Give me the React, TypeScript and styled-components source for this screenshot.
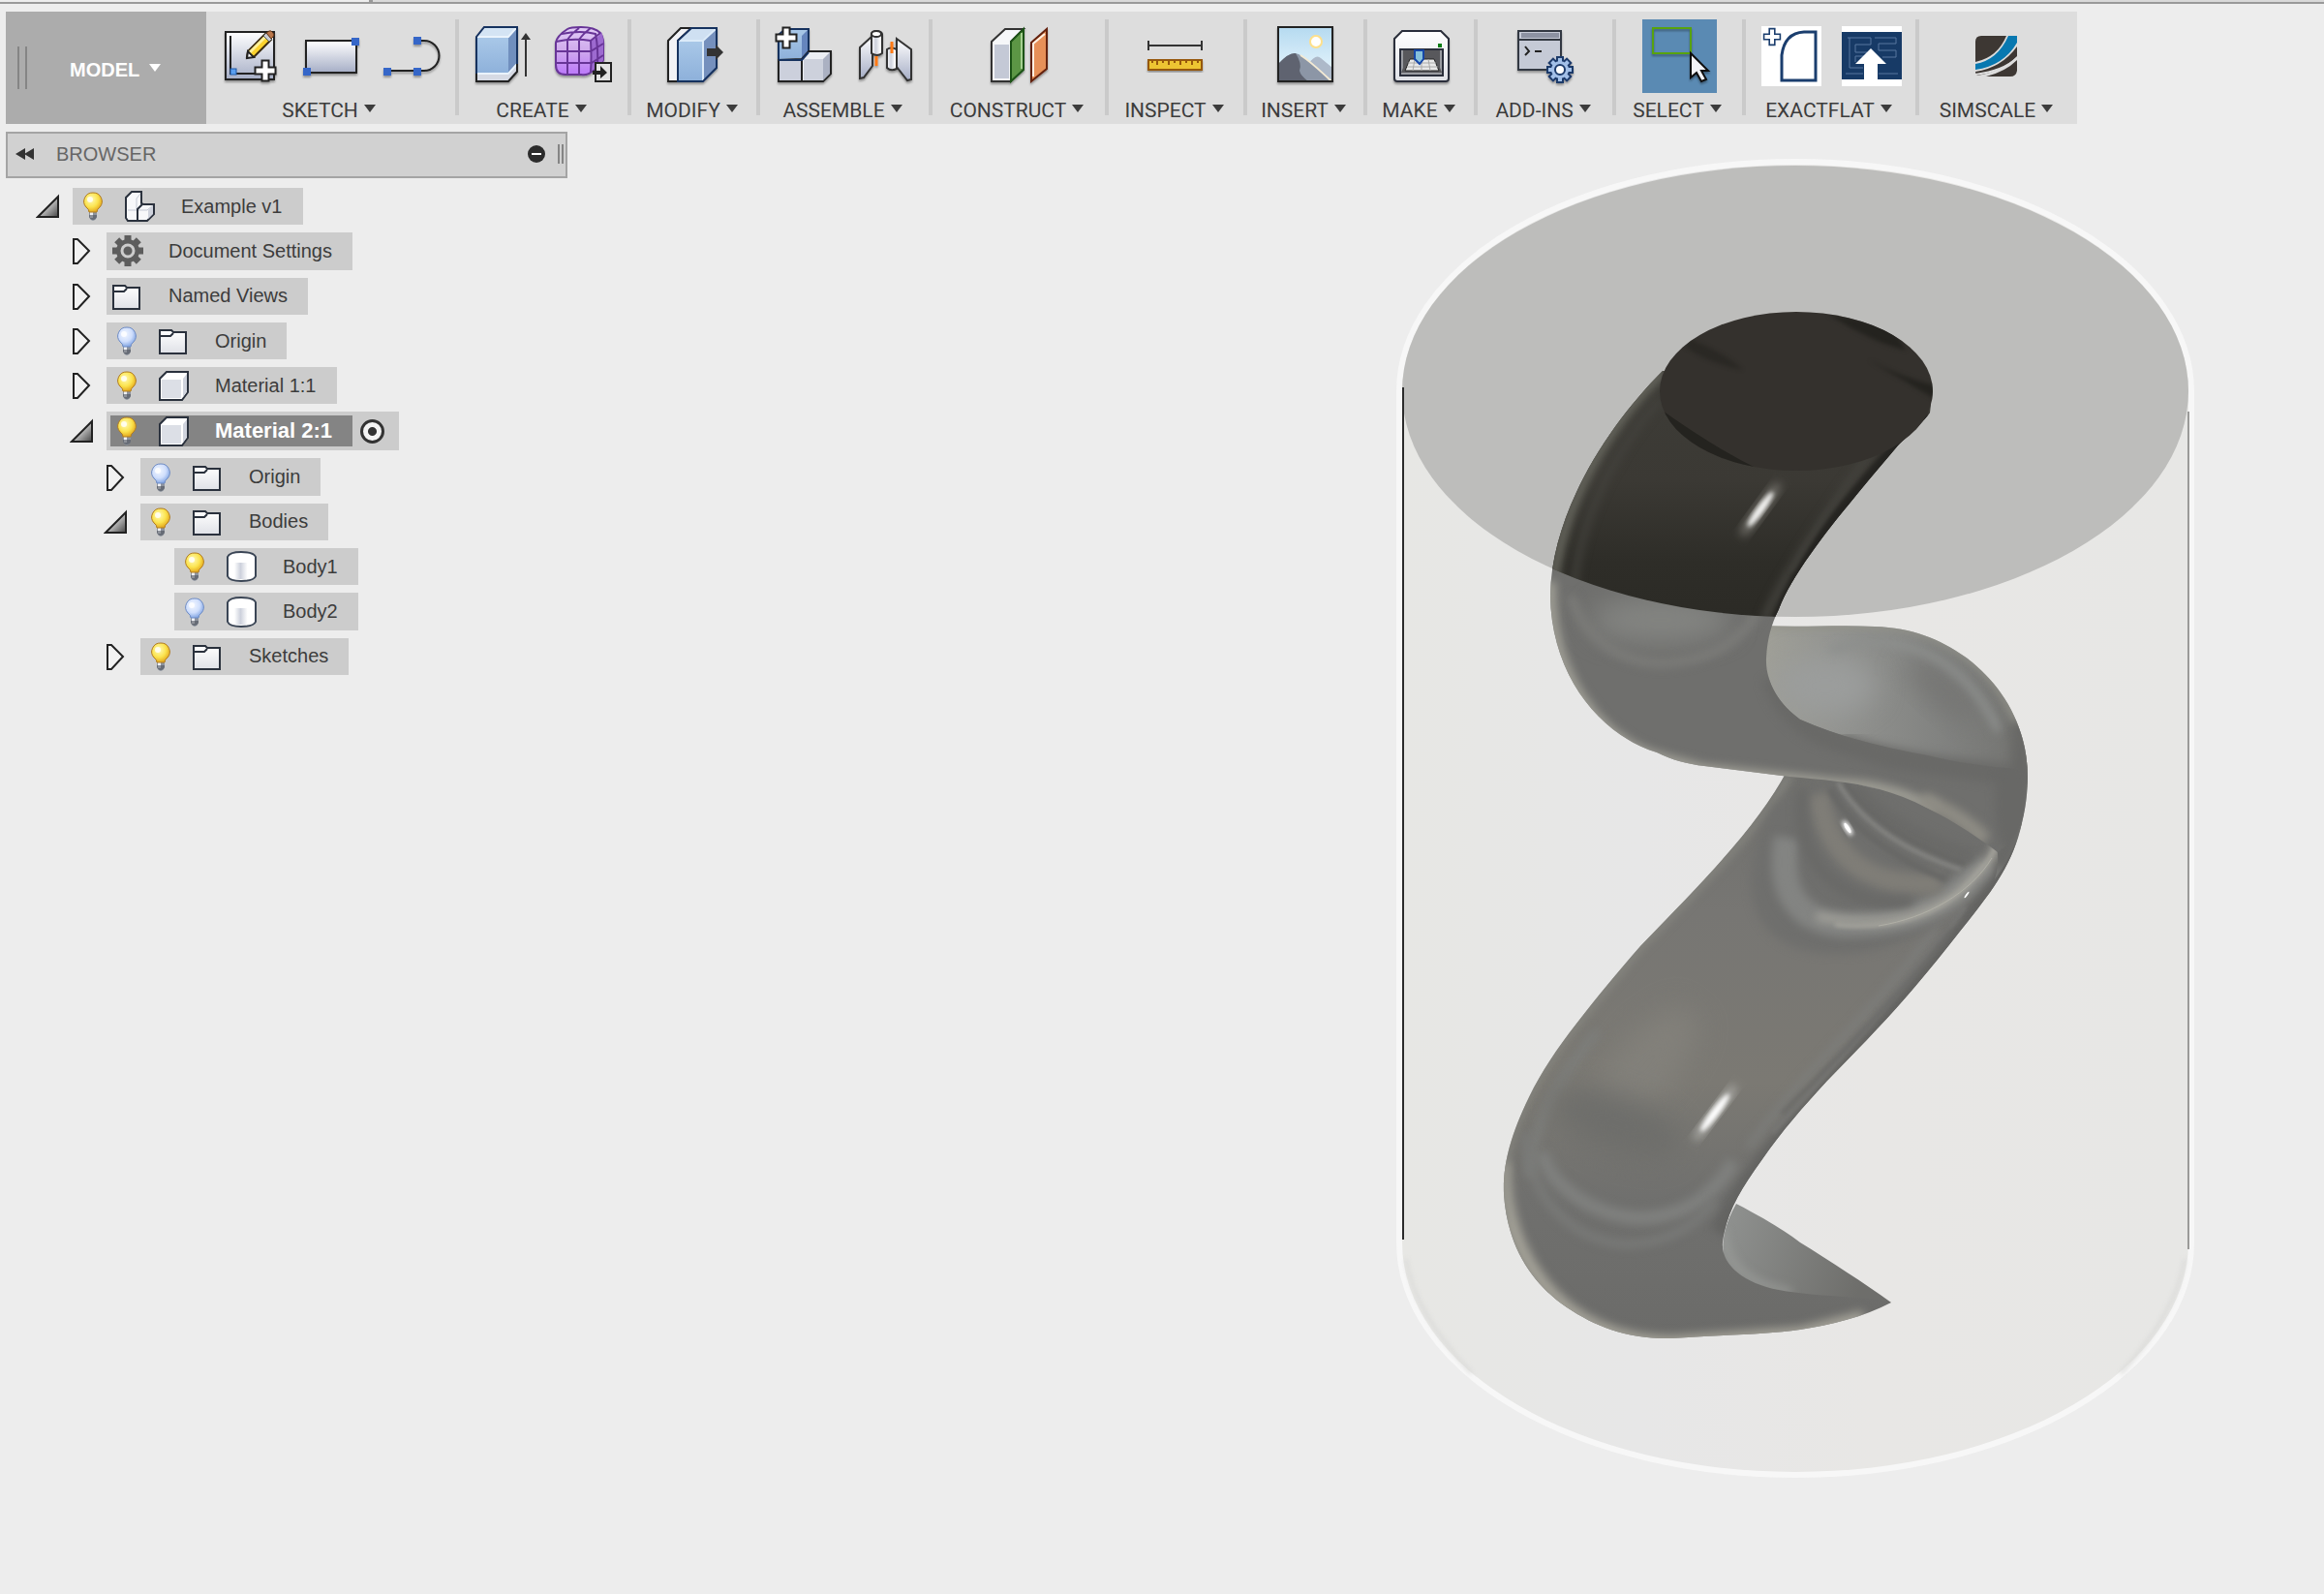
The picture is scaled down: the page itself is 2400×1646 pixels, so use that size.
import React, { useState } from "react";
import styled, { createGlobalStyle } from "styled-components";

const GlobalStyle = createGlobalStyle`
  *, *::before, *::after { box-sizing: border-box; }
  body {
    margin: 0;
    background: #ededed;
    font-family: "Liberation Sans", Arial, Helvetica, sans-serif;
    font-size: 20px;
    color: #3c3c3c;
  }
  button {
    margin: 0;
    padding: 0;
    border: 0;
    background: none;
    color: inherit;
    font: inherit;
    cursor: pointer;
  }
  svg { display: block; }
`;

const Page = styled.div`
  display: flex;
  flex-direction: column;
  min-height: 100vh;
  overflow: hidden;
`;

const TabStrip = styled.div`
  display: flex;
  height: 4px;
  border-bottom: 2px solid #999999;
`;

const ActiveTab = styled.div`
  width: 385px;
  border-right: 4px solid #999999;
`;

const OtherTabs = styled.div`
  flex: 1;
  background: #d9d9d9;
`;

/* ---------- toolbar ---------- */

const Toolbar = styled.header`
  display: flex;
  align-self: flex-start;
  height: 116px;
  margin: 8px 6px 0;
  background: #dddddd;
`;

const ModelButton = styled.button`
  display: flex;
  align-items: center;
  width: 207px;
  padding: 0 12px;
  background: #acacac;
  color: #ffffff;
  font-weight: bold;
`;

const Grip = styled.span<{ $height: number; $width: number }>`
  width: ${(p) => p.$width}px;
  height: ${(p) => p.$height}px;
  border: solid #858585;
  border-width: 0 2px;
`;

const ModelText = styled.span`
  display: flex;
  align-items: center;
  gap: 10px;
  margin-left: 44px;
  padding-top: 4px;
`;

const Group = styled.section<{ $width: number }>`
  display: flex;
  flex-direction: column;
  align-items: center;
  width: ${(p) => p.$width}px;
  padding-top: 8px;
`;

const Divider = styled.div`
  width: 4px;
  height: 99px;
  margin-top: 8px;
  background: #cacaca;
`;

const IconRow = styled.div`
  display: flex;
  gap: 6px;
`;

const ToolButton = styled.button<{ $active?: boolean }>`
  width: 77px;
  height: 76px;
  background: ${(p) => (p.$active ? "#5a8ab3" : "transparent")};
`;

const MenuButton = styled.button`
  display: flex;
  align-items: center;
  gap: 6px;
  margin-top: 6px;
  padding-right: 4px;
  font-family: Roboto, "Liberation Sans", sans-serif;
  font-size: 21px;
  line-height: 24px;
  white-space: nowrap;
`;

const Caret = styled.span`
  border: solid transparent;
  border-width: 8px 6px 0;
  border-top-color: currentColor;
  margin-bottom: 4px;
`;

/* ---------- browser panel ---------- */

const Workspace = styled.main`
  display: flex;
  flex: 1;
  justify-content: space-between;
  align-items: flex-start;
`;

const Panel = styled.aside`
  width: 580px;
  margin: 8px 0 0 6px;
`;

const PanelHeader = styled.div`
  display: flex;
  align-items: center;
  height: 48px;
  padding: 0 2px 2px 8px;
  border: 2px solid #a4a4a4;
  background: #d1d1d1;
`;

const PanelTitle = styled.h2`
  flex: 1;
  margin: 0 0 0 22px;
  color: #666666;
  font-size: 20px;
  font-weight: normal;
`;

const PanelActions = styled.div`
  display: flex;
  align-items: center;
  gap: 13px;
`;

const Tree = styled.ul`
  display: grid;
  grid-auto-rows: 1fr;
  row-gap: 8px;
  height: 503px;
  margin: 10px 0 0;
  padding: 0 0 0 31px;
  list-style: none;
`;

const TreeRow = styled.li<{ $level: number }>`
  display: flex;
  align-items: center;
  padding-left: ${(p) => p.$level * 35}px;
`;

const Expander = styled.button`
  width: 38px;
  height: 38px;
`;

const ExpanderSpace = styled.span`
  width: 38px;
`;

const NodeBox = styled.div<{ $selected?: boolean }>`
  display: flex;
  align-items: center;
  height: 100%;
  padding: ${(p) => (p.$selected ? "4px 15px 4px 4px" : "0")};
  background: #cccccc;
`;

const NodeInner = styled.div<{ $selected?: boolean }>`
  display: flex;
  align-items: center;
  height: 100%;
  padding: ${(p) => (p.$selected ? "0 21px 0 2px" : "0 21px 0 6px")};
  background: ${(p) => (p.$selected ? "#848484" : "transparent")};
  color: ${(p) => (p.$selected ? "#ffffff" : "#3c3c3c")};
  font-size: ${(p) => (p.$selected ? 22 : 20)}px;
  font-weight: ${(p) => (p.$selected ? "bold" : "normal")};
`;

const BulbButton = styled.button`
  width: 48px;
`;

const NodeName = styled.button`
  display: flex;
  align-items: center;
  gap: 26px;
  white-space: nowrap;
`;

const ActiveRadio = styled.input`
  appearance: none;
  width: 25px;
  height: 25px;
  margin: 0 0 0 8px;
  border: 3px solid #333333;
  border-radius: 50%;
  background: radial-gradient(circle, #333333 0 4px, #f4f4f4 5px);
`;

const Viewport = styled.div`
  flex: 0 1 860px;
  margin: 12px 120px 0 0;
  & > svg { width: 100%; height: auto; }
`;

/* ---------- toolbar icons ---------- */

const Ico = ({ children }: { children: React.ReactNode }) => (
  <svg width="77" height="76" viewBox="0 0 77 76" aria-hidden="true">
    {children}
  </svg>
);

const Plus = ({ x, y, stroke = "#222" }: { x: number; y: number; stroke?: string }) => (
  <path
    transform={`translate(${x} ${y})`}
    d="M-3.500 -10.500H3.500V-3.500H10.500V3.500H3.500V10.500H-3.500V3.500H-10.500V-3.500H-3.500Z"
    fill="#fff"
    stroke={stroke}
    strokeWidth="2"
  />
);

const SharedDefs = () => (
  <svg width="0" height="0" aria-hidden="true" style={{ position: "absolute" }}>
    <defs>
      <linearGradient id="steel" x1="0" y1="0" x2="0" y2="1">
        <stop offset="0" stopColor="#ffffff" />
        <stop offset="1" stopColor="#a6aec6" />
      </linearGradient>
      <linearGradient id="blueFace" x1="0" y1="0" x2="0" y2="1">
        <stop offset="0" stopColor="#a9c8e8" />
        <stop offset="1" stopColor="#8db0da" />
      </linearGradient>
      <linearGradient id="purple" x1="0" y1="0" x2="0" y2="1">
        <stop offset="0" stopColor="#e2cdf7" />
        <stop offset="0.5" stopColor="#cfa9ec" />
        <stop offset="1" stopColor="#bb78fa" />
      </linearGradient>
      <linearGradient id="sky" x1="0" y1="0" x2="0" y2="1">
        <stop offset="0" stopColor="#b5daf0" />
        <stop offset="1" stopColor="#eef9ff" />
      </linearGradient>
      <linearGradient id="paper" x1="0" y1="0" x2="0" y2="1">
        <stop offset="0" stopColor="#ffffff" />
        <stop offset="1" stopColor="#dfe1e7" />
      </linearGradient>
      <linearGradient id="wedge" x1="0" y1="0" x2="1" y2="1">
        <stop offset="0.3" stopColor="#ececec" />
        <stop offset="1" stopColor="#444444" />
      </linearGradient>
      <linearGradient id="barrel" x1="0" y1="0" x2="1" y2="0">
        <stop offset="0" stopColor="#ffffff" />
        <stop offset="0.4" stopColor="#cdd1dc" />
        <stop offset="0.85" stopColor="#ffffff" />
      </linearGradient>
      <radialGradient id="bulbOn" cx="0.4" cy="0.35" r="0.65">
        <stop offset="0" stopColor="#fffbb8" />
        <stop offset="0.6" stopColor="#fbe34e" />
        <stop offset="1" stopColor="#e4a91e" />
      </radialGradient>
      <radialGradient id="bulbOff" cx="0.4" cy="0.35" r="0.65">
        <stop offset="0" stopColor="#f2f7ff" />
        <stop offset="0.6" stopColor="#cfdefc" />
        <stop offset="1" stopColor="#86a8e4" />
      </radialGradient>
      <filter id="iconShadow" x="-20%" y="-20%" width="140%" height="150%">
        <feDropShadow dx="0" dy="2" stdDeviation="1" floodColor="#000" floodOpacity="0.35" />
      </filter>
    </defs>
  </svg>
);

const SketchIcon = () => (
  <Ico>
    <g filter="url(#iconShadow)">
      <rect x="13" y="13" width="50" height="49" fill="url(#steel)" stroke="#222" strokeWidth="2" />
      <path d="M18 17V56H58" fill="none" stroke="#222" strokeWidth="2" />
      <rect x="18" y="51" width="6" height="6" fill="#5a9ff0" stroke="#1e5aa8" strokeWidth="1" />
      <path d="M35 39L36 33L54 15L60 21L42 39Z" fill="#fbd22e" stroke="#3a2b10" strokeWidth="2" />
      <path d="M38 34L56 16" stroke="#fff19a" strokeWidth="3" />
      <path d="M35 40L36 33L42 39Z" fill="#fff" stroke="#222" strokeWidth="2" />
      <path d="M52 17L55 14L61 20L58 23Z" fill="#c9ccd3" stroke="#555" />
      <path d="M55 14L58 12Q60 11 62 14Q64 16 62 18L60 20Z" fill="#b9774c" stroke="#5c3317" />
      <Plus x={54} y={53} />
    </g>
  </Ico>
);

const RectangleIcon = () => (
  <Ico>
    <g filter="url(#iconShadow)">
      <rect x="13" y="22" width="52" height="33" fill="url(#steel)" stroke="#222" strokeWidth="2" />
      <rect x="60" y="19" width="8" height="8" fill="#3566c8" />
      <rect x="10" y="50" width="8" height="8" fill="#3566c8" />
    </g>
  </Ico>
);

const LineIcon = () => (
  <Ico>
    <g filter="url(#iconShadow)">
      <path d="M45 22H52A15 15 0 0 1 52 53H14" fill="none" stroke="#222" strokeWidth="2" />
      <rect x="41" y="18" width="8" height="8" fill="#3566c8" />
      <rect x="41" y="50" width="8" height="8" fill="#3566c8" />
      <rect x="10" y="50" width="8" height="8" fill="#3566c8" />
    </g>
  </Ico>
);

const ExtrudeIcon = () => (
  <Ico>
    <g filter="url(#iconShadow)">
      <path d="M11 18L19 8H53V54L44 64H11Z" fill="#d4e4f4" />
      <path d="M44 18L53 8V54L44 64Z" fill="#6f8fbe" />
      <rect x="12" y="18" width="32" height="39" fill="url(#blueFace)" />
      <path d="M12 57H44L53 47V54L44 64H12Z" fill="#d6dae4" />
      <path d="M12 56H44L53 46M12 18H44L52 9" fill="none" stroke="#eaf3fc" strokeWidth="2" />
      <path d="M11 56V18L19 8H53V46" fill="none" stroke="#16305f" strokeWidth="2" />
      <path d="M11 56V64H44L53 54V46" fill="none" stroke="#222" strokeWidth="2" />
    </g>
    <path d="M62 59V18" stroke="#333" strokeWidth="2" />
    <path d="M57 21L62 14L67 21Z" fill="#333" />
  </Ico>
);

const FormIcon = () => (
  <Ico>
    <g filter="url(#iconShadow)">
      <path d="M10 24Q11 17 22 10Q25 8 36 8Q50 8 56 14Q60 20 59 30V42Q57 48 47 54Q43 58 36 57H20Q10 57 10 47Z" fill="url(#purple)" stroke="#673497" strokeWidth="2" />
      <path d="M47 22Q57 16 57 13Q60 20 59 30V42Q57 48 47 53Z" fill="#9d6bd0" />
      <path d="M10 23Q28 19 46 22Q47 40 46 54M10 33H46L59 25M10 45H47L59 37M22 21V57M34 21V57M22 21Q26 15 34 9M34 21Q38 15 46 9M16 15Q36 11 51 15Q54 30 53 49M46 22L56 14" fill="none" stroke="#673497" strokeWidth="2" />
    </g>
    <rect x="51" y="45" width="16" height="19" fill="#e2e2e2" stroke="#222" strokeWidth="2" />
    <path d="M48 53H56V48L63 55L56 61V57H48Z" fill="#222" />
  </Ico>
);

const PressPullIcon = () => (
  <Ico>
    <g filter="url(#iconShadow)">
      <path d="M12 22L25 9H36L22 22V64H12Z" fill="#f1f2f6" stroke="#222" strokeWidth="2" />
      <path d="M22 22L36 9H62V50L48 64H22Z" fill="#cfe0f2" />
      <path d="M48 22L62 9V50L48 64Z" fill="#7490bd" />
      <rect x="22" y="22" width="26" height="42" fill="url(#blueFace)" />
      <path d="M23 22H48V63M48 22L61 10" fill="none" stroke="#dcebf9" strokeWidth="2" />
      <path d="M22 22L36 9H62V50L48 64H22Z" fill="none" stroke="#16305f" strokeWidth="2" />
    </g>
    <path d="M52 30H61V26L69 34L61 42V38H52Z" fill="#333" />
  </Ico>
);

const ComponentIcon = () => (
  <Ico>
    <g filter="url(#iconShadow)">
      <path d="M12 42V16L19 10H43V34L36 42Z" fill="url(#blueFace)" stroke="#16305f" strokeWidth="2" />
      <path d="M36 17L42 11V34L36 41Z" fill="#6585bd" />
      <path d="M36 41L43 33H66V56L58 64H12V42Z" fill="#eceef3" stroke="#222" strokeWidth="2" />
      <rect x="13" y="43" width="22" height="20" fill="#ccd0dc" />
      <rect x="38" y="41" width="20" height="22" fill="#cdd1dc" />
      <path d="M58 41L65 34V56L58 63Z" fill="#abb1c2" />
      <path d="M36 42V64" stroke="#222" strokeWidth="2" />
      <path d="M12 42H36L43 34" fill="none" stroke="#16305f" strokeWidth="2" />
    </g>
    <Plus x={20} y={19} />
  </Ico>
);

const JointIcon = () => (
  <Ico>
    <g filter="url(#iconShadow)" strokeWidth="2" stroke="#333">
      <path d="M13 29L26 17V48L17 60L13 61Z" fill="url(#steel)" />
      <path d="M25 15Q26 12 30 12Q35 12 36 15V35Q31 39 25 35Z" fill="url(#barrel)" />
      <ellipse cx="30" cy="15" rx="5" ry="3" fill="#fff" />
      <path d="M41 31Q45 28 51 31V51Q45 54 41 50Z" fill="url(#barrel)" />
      <path d="M51 20L66 31V62L62 63L51 49Z" fill="url(#steel)" />
      <path d="M30 38V48M46 23V35" stroke="#ff7a12" strokeWidth="3" />
    </g>
  </Ico>
);

const PlaneIcon = () => (
  <Ico>
    <g filter="url(#iconShadow)">
      <path d="M10 23L24 10H43L30 23V64H10Z" fill="#f6f7f9" stroke="#333" strokeWidth="2" />
      <rect x="13" y="26" width="15" height="35" fill="#c4c9d6" />
      <path d="M30 23L43 10V52L30 64Z" fill="#5b9645" stroke="#1d5218" strokeWidth="2" />
      <path d="M41 14V51" stroke="#a5d191" strokeWidth="2" />
      <path d="M51 24L67 10V51L51 64Z" fill="#e69058" stroke="#64200c" strokeWidth="2" />
      <path d="M53 59V25L65 15" fill="none" stroke="#fff1e4" strokeWidth="2" />
    </g>
  </Ico>
);

const MeasureIcon = () => (
  <Ico>
    <path d="M10 22V32M65 22V32M10 27H65" stroke="#333" strokeWidth="2" />
    <g filter="url(#iconShadow)">
      <rect x="10" y="42" width="55" height="10" fill="#edc431" stroke="#96580a" strokeWidth="2" />
      <path d="M14 42V45M19 42V47M25 42V45M31 42V47M37 42V45M43 42V47M49 42V45M55 42V47M61 42V45" stroke="#96580a" strokeWidth="2" />
    </g>
  </Ico>
);

const ImageIcon = () => (
  <Ico>
    <g filter="url(#iconShadow)">
      <rect x="10" y="8" width="56" height="56" fill="url(#sky)" />
      <circle cx="49" cy="23" r="6" fill="#fff" stroke="#ffe08a" strokeWidth="2" />
      <path d="M41 46Q49 35 54 40L66 50V64H41Z" fill="#adb9c9" />
      <path d="M10 46Q21 34 28 35Q39 38 65 64H10Z" fill="#8c96a6" />
      <path d="M10 46Q21 34 28 35Q35 46 32 53Q33 58 41 64H10Z" fill="#5e6470" />
      <path d="M33 37Q43 43 65 64" fill="none" stroke="#f3ead4" strokeWidth="2" />
      <rect x="10" y="8" width="56" height="56" fill="none" stroke="#222" strokeWidth="2" />
    </g>
  </Ico>
);

const PrinterIcon = () => (
  <Ico>
    <g filter="url(#iconShadow)">
      <path d="M11 20L19 12H59L67 20V61Q67 64 64 64H14Q11 64 11 61Z" fill="url(#paper)" stroke="#2b2f3a" strokeWidth="2" />
      <rect x="17" y="31" width="44" height="27" fill="#9a9ca2" stroke="#2b2f3a" strokeWidth="2" />
      <path d="M20 32H58V50L60 55H18L20 50Z" fill="#58595c" />
      <path d="M27 41H52L57 53H22Z" fill="#e8e8e8" stroke="#222" />
      <path d="M25 45H54M24 49H56M32 41L30 53M39 41V53M46 41L48 53" stroke="#a8a8a8" />
      <path d="M32 32H41V41L37 46L32 41Z" fill="#86c0dc" stroke="#1646a8" strokeWidth="2" />
      <rect x="56" y="25" width="4" height="4" fill="#0d7d12" />
    </g>
  </Ico>
);

const Teeth = ({ r, w, h, fill }: { r: number; w: number; h: number; fill: string }) => (
  <>
    {[0, 45, 90, 135, 180, 225, 270, 315].map((a) => (
      <rect key={a} x={-w / 2} y={-r} width={w} height={h} fill={fill} transform={`rotate(${a})`} />
    ))}
  </>
);

const ScriptIcon = () => (
  <Ico>
    <g filter="url(#iconShadow)">
      <rect x="11" y="12" width="44" height="40" fill="#c5cad6" stroke="#333842" strokeWidth="2" />
      <rect x="14" y="14" width="39" height="5" fill="#8c92a2" />
      <path d="M11 21H55" stroke="#333842" strokeWidth="2" />
      <path d="M18 28L22 33L18 37M28 33H35" fill="none" stroke="#222" strokeWidth="2" />
      <g transform="translate(54 52)">
        <Teeth r={14} w={8} h={7} fill="#1f3a6b" />
        <circle r="11" fill="#1f3a6b" />
        <Teeth r={12} w={4} h={6} fill="#a3c0e8" />
        <circle r="9" fill="#a3c0e8" />
        <circle r="5" fill="#fff" stroke="#1f3a6b" strokeWidth="2" />
      </g>
    </g>
  </Ico>
);

const SelectIcon = () => (
  <Ico>
    <g filter="url(#iconShadow)">
      <rect x="11" y="9" width="39" height="26" fill="none" stroke="#58a30a" strokeWidth="2" />
      <path d="M50 35V60L56 55L61 64L66 62L61 53H68Z" fill="#f2f3f7" stroke="#111" strokeWidth="2" />
    </g>
  </Ico>
);

const FlatNewIcon = () => (
  <Ico>
    <rect x="8" y="7" width="62" height="62" fill="#fff" />
    <path d="M64 13V63H29V37Q32 14 52 13Z" fill="none" stroke="#1b3e6e" strokeWidth="3" />
    <g transform="translate(19 18) scale(0.800)">
      <Plus x={0} y={0} stroke="#1b3e6e" />
    </g>
  </Ico>
);

const FlatExportIcon = () => (
  <Ico>
    <rect x="8" y="7" width="62" height="62" fill="#fff" />
    <rect x="8" y="13" width="62" height="49" fill="#173a66" />
    <path d="M14 19H38V26H22V34H34M16 19V50H30M42 19H64V25H46V32H64V39H50M12 56H30M46 56H66M34 38H22V44" fill="none" stroke="#58779f" strokeWidth="1" />
    <path d="M38 30L54 46H45V69H31V46H22Z" fill="#fff" />
  </Ico>
);

const SimscaleIcon = () => (
  <Ico>
    <path d="M15 44V23Q15 17 21 17H47Q38 39 15 44Z" fill="#3d3733" />
    <path d="M49 17H58V24Q44 48 15 52V46Q38 42 49 17Z" fill="#0878b0" />
    <path d="M58 28V38Q42 54 17 58Q15 57 15 54Q42 50 58 28Z" fill="#3d3733" />
    <path d="M58 42V53Q57 59 51 59H26Q46 54 58 42Z" fill="#3d3733" />
    <path d="M15 57Q44 53 58 40" fill="none" stroke="#dddddd" strokeWidth="2" />
  </Ico>
);

/* ---------- tree icons ---------- */

const Collapsed = () => (
  <svg width="38" height="38" viewBox="0 0 38 38" aria-hidden="true">
    <path d="M4 7H8L20 19L8 32H4Z" fill="#f2f2f2" stroke="#222" strokeWidth="2" />
  </svg>
);

const Expanded = () => (
  <svg width="38" height="38" viewBox="0 0 38 38" aria-hidden="true">
    <path d="M2 30L23 9V30Z" fill="url(#wedge)" stroke="#222" strokeWidth="2" />
  </svg>
);

const Bulb = ({ on }: { on: boolean }) => (
  <svg width="30" height="32" viewBox="0 0 30 32" aria-hidden="true">
    <path d="M11 20H19V27Q18 30 15 31Q12 30 11 27Z" fill="#8e949f" />
    <path d="M12 20H15V28H12Z" fill="#eef0f4" />
    <path d="M11 25H19V27Q18 30 15 30Q12 30 11 27Z" fill="#4c515c" opacity="0.600" />
    <path d="M15 2A9 9 0 0 1 22 17Q19 19 19 22H11Q11 19 8 17A9 9 0 0 1 15 2Z" fill={on ? "url(#bulbOn)" : "url(#bulbOff)"} stroke={on ? "#b07c22" : "#6f8cc4"} />
    <circle cx="12" cy="9" r="3" fill="#fff" opacity="0.800" />
  </svg>
);

type Kind = "assembly" | "gear" | "folder" | "box" | "cylinder";

const KindIcon = ({ kind }: { kind: Kind }) => (
  <svg width="32" height="32" viewBox="0 0 32 32" aria-hidden="true">
    {kind === "folder" && (
      <>
        <path d="M1 29V5H13L15 7H28V29Z" fill="url(#paper)" stroke="#2a313d" strokeWidth="2" />
        <path d="M1 11H12L15 8" fill="none" stroke="#2a313d" strokeWidth="2" />
      </>
    )}
    {kind === "box" && (
      <>
        <path d="M1 9L8 2H30V23L24 31H1Z" fill="#ffffff" stroke="#2a313d" strokeWidth="2" />
        <rect x="3" y="10" width="20" height="19" fill="#dcdfe6" />
        <path d="M25 9L29 4V22L25 28Z" fill="#cfd3dd" />
      </>
    )}
    {kind === "assembly" && (
      <>
        <path d="M1 28V7L7 1H17V13L19 14H30V24L23 31H3Z" fill="#f7f8fa" stroke="#2a313d" strokeWidth="2" />
        <path d="M13 20H3M13 20H23L29 15M12 8V19M12 8L16 3" fill="none" stroke="#c3c8d3" strokeWidth="1" />
        <path d="M13 31V19L18 14" fill="none" stroke="#2a313d" strokeWidth="2" />
        <path d="M24 20L29 15V24L24 29Z" fill="#cfd3dd" />
      </>
    )}
    {kind === "cylinder" && (
      <>
        <path d="M1 6Q3 1 15 1Q28 1 30 6V26Q28 31 15 31Q3 31 1 26Z" fill="#ffffff" stroke="#3a4555" strokeWidth="2" />
        <rect x="8" y="12" width="16" height="17" fill="url(#barrel)" />
      </>
    )}
    {kind === "gear" && (
      <g transform="translate(16 16)">
        <Teeth r={16} w={7} h={7} fill="#5d5d5d" />
        <circle r="12" fill="#5d5d5d" />
        <circle r="6" fill="none" stroke="#cccccc" strokeWidth="3" />
      </g>
    )}
  </svg>
);

/* ---------- 3D model drawing ---------- */

const LOWER =
  "M1846 795C1816 852 1762 907 1694 977C1668 1007 1648 1031 1628 1057C1608 1083 1592 1106 1579 1133C1560 1172 1552 1202 1553 1232C1556 1285 1580 1324 1618 1350C1648 1370 1680 1383 1727 1382L1760 1380C1800 1378 1830 1377 1859 1373C1890 1368 1925 1360 1953 1345C1930 1338 1880 1340 1837 1332C1800 1325 1777 1305 1779 1283C1782 1255 1796 1230 1820 1197C1840 1168 1862 1143 1886 1117C1912 1090 1942 1060 1968 1030C1988 1007 2005 986 2023 963C2055 923 2078 895 2088 850L2090 795Z";
const FLAP =
  "M1793 1243C1822 1258 1845 1272 1859 1283C1890 1302 1925 1325 1953 1345L1886 1350L1790 1320C1774 1300 1777 1270 1793 1243Z";
const LOOP =
  "M1820 646C1860 648 1900 645 1936 647C1975 648 2003 660 2029 678C2066 705 2094 748 2094 803C2093 850 2080 880 2060 908C2068 880 2060 862 2050 852C2020 830 1980 823 1941 815C1860 800 1830 760 1820 700Z";
const FRONT =
  "M1717 383C1660 440 1602 530 1601 615C1602 700 1655 760 1711 777C1727 785 1743 789 1760 791L1848 802C1880 805 1912 807 1941 815C1985 827 2030 855 2063 880C2092 860 2096 830 2085 794C2050 792 2020 787 1990 780C1945 772 1900 761 1859 743C1838 728 1823 705 1824 680C1825 660 1829 645 1837 629C1850 595 1885 550 1914 515C1930 495 1945 478 1960 460C1975 445 1987 435 1993 426L1995 404L1717 383Z";

const Model = () => (
  <svg viewBox="1420 140 860 1400" role="img" aria-label="Helical body inside a transparent cylinder">
    <defs>
      <clipPath id="lowerClip"><path d={LOWER} /></clipPath>
      <clipPath id="frontClip"><path d={FRONT} /></clipPath>
      <clipPath id="loopClip"><path d={LOOP} /></clipPath>
      <clipPath id="flapClip"><path d={FLAP} /></clipPath>
      <clipPath id="diskClip"><ellipse cx="1854" cy="404" rx="406" ry="233" /></clipPath>
      <clipPath id="capClip"><ellipse cx="1855" cy="404" rx="141" ry="82" /></clipPath>
      <filter id="b2" x="-20%" y="-20%" width="140%" height="140%" colorInterpolationFilters="sRGB"><feGaussianBlur stdDeviation="2" /></filter>
      <filter id="b5" x="-30%" y="-30%" width="160%" height="160%" colorInterpolationFilters="sRGB"><feGaussianBlur stdDeviation="5" /></filter>
      <filter id="b14" x="-50%" y="-50%" width="200%" height="200%" colorInterpolationFilters="sRGB"><feGaussianBlur stdDeviation="14" /></filter>
      <linearGradient id="glass" x1="0" x2="1" y1="0" y2="0">
        <stop offset="0" stopColor="#e7e7e4" />
        <stop offset="0.3" stopColor="#e7e7e7" />
        <stop offset="0.6" stopColor="#e8e7e5" />
        <stop offset="1" stopColor="#e7e7e5" />
      </linearGradient>
      <linearGradient id="lowerFill" x1="0" y1="0" x2="0" y2="1">
        <stop offset="0" stopColor="#6f6f6c" />
        <stop offset="0.25" stopColor="#777673" />
        <stop offset="0.55" stopColor="#7b7973" />
        <stop offset="0.75" stopColor="#70706e" />
        <stop offset="1" stopColor="#6b6b69" />
      </linearGradient>
      <linearGradient id="darkFill" x1="0" y1="0" x2="0" y2="1">
        <stop offset="0" stopColor="#3e3d38" />
        <stop offset="0.45" stopColor="#3b3934" />
        <stop offset="0.75" stopColor="#2e2d28" />
        <stop offset="1" stopColor="#2b2a25" />
      </linearGradient>
      <linearGradient id="loopFill" x1="0" x2="1" y1="0" y2="0">
        <stop offset="0" stopColor="#a0a098" />
        <stop offset="0.3" stopColor="#929390" />
        <stop offset="0.7" stopColor="#80817f" />
        <stop offset="1" stopColor="#72726f" />
      </linearGradient>
      <linearGradient id="flapFill" gradientUnits="userSpaceOnUse" x1="1780" x2="1920" y1="1280" y2="1330">
        <stop offset="0" stopColor="#8e908e" />
        <stop offset="1" stopColor="#6e6e6b" />
      </linearGradient>
    </defs>

    {/* glass cylinder */}
    <path d="M1448 404A406 234 0 0 1 2260 404V1283A406 237 0 0 1 1448 1283Z" fill="url(#glass)" stroke="#f7f7f7" strokeWidth="12" />
    <path d="M1448 404A406 234 0 0 1 2260 404V1283A406 237 0 0 1 1448 1283Z" fill="url(#glass)" />
    <path d="M1452 1300Q1460 1355 1520 1418M2256 1300Q2248 1355 2190 1418" fill="none" stroke="#dadad8" strokeWidth="3" filter="url(#b2)" />
    <ellipse cx="1854" cy="404" rx="406" ry="233" fill="#bdbdbb" />
    <path d="M1449 400V1280" stroke="#2b2b2b" strokeWidth="2" />
    <path d="M2260 425V1290" stroke="#9a9a98" strokeWidth="2" />

    {/* bottom flap */}
    <path d={FLAP} fill="url(#flapFill)" />
    <g clipPath="url(#flapClip)">
      <path d="M1779 1270C1782 1310 1810 1328 1850 1334" fill="none" stroke="#999b98" strokeWidth="6" filter="url(#b5)" />
    </g>

    {/* lower run of the tube */}
    <path d={LOWER} fill="url(#lowerFill)" />
    <g clipPath="url(#lowerClip)">
      <path d="M1553 1200C1550 1280 1600 1385 1727 1386L1859 1377L1925 1360" fill="none" stroke="#a3a197" strokeWidth="14" filter="url(#b5)" />
      <path d="M1848 800C1816 855 1762 907 1694 977L1628 1057C1570 1130 1545 1190 1553 1260" fill="none" stroke="#8b8b84" strokeWidth="6" filter="url(#b5)" />
      <path d="M2090 870C2040 960 1960 1050 1890 1126C1834 1190 1804 1220 1780 1275" fill="none" stroke="#636361" strokeWidth="28" filter="url(#b5)" />
      <path d="M2000 958C1940 1040 1870 1100 1805 1185" fill="none" stroke="#7d7e7c" strokeWidth="6" filter="url(#b5)" />
      <path d="M2030 936C1965 1022 1890 1105 1830 1170" fill="none" stroke="#787876" strokeWidth="4" filter="url(#b2)" />
      <path d="M2016 960C1960 1030 1900 1090 1840 1150" fill="none" stroke="#6a6a68" strokeWidth="4" filter="url(#b2)" />
      <path d="M1650 1065C1608 1115 1582 1160 1580 1215" fill="none" stroke="#7c7d7a" strokeWidth="10" filter="url(#b5)" />
      <ellipse cx="1700" cy="1100" rx="72" ry="32" fill="#82807a" transform="rotate(-50 1700 1100)" filter="url(#b14)" />
      <ellipse cx="1670" cy="1160" rx="70" ry="30" fill="#6e6e6b" transform="rotate(20 1670 1160)" filter="url(#b14)" />
      <path d="M1592 1190C1602 1228 1650 1256 1694 1258C1740 1256 1768 1236 1790 1200" fill="none" stroke="#7f807e" strokeWidth="14" filter="url(#b5)" />
      <path d="M1576 1170C1576 1240 1630 1285 1683 1285C1725 1283 1755 1262 1771 1240" fill="none" stroke="#7a7b79" strokeWidth="8" filter="url(#b5)" />

      {/* hollow under the coil */}
      <path d="M1832 830C1785 920 1810 985 1895 985C1960 985 2010 955 2050 905L2070 840L1900 800Z" fill="#6f6f6d" filter="url(#b5)" />
      <path d="M1845 865C1835 925 1860 952 1905 955C1955 955 2010 945 2050 890" fill="none" stroke="#838482" strokeWidth="26" filter="url(#b5)" />
      <path d="M1878 820C1888 890 1935 918 2005 912" fill="none" stroke="#7f7d77" strokeWidth="22" filter="url(#b5)" />
      <path d="M1862 815C1850 885 1895 938 1975 932" fill="none" stroke="#696967" strokeWidth="12" filter="url(#b5)" />
      <path d="M1915 812C1945 850 1990 870 2040 886" fill="none" stroke="#6a6a68" strokeWidth="16" filter="url(#b5)" />
      <path d="M1898 808C1923 850 1965 878 2025 898" fill="none" stroke="#878784" strokeWidth="4" filter="url(#b2)" />
      <path d="M1906 808C1933 848 1973 872 2030 892" fill="none" stroke="#666664" strokeWidth="4" filter="url(#b2)" />
      <path d="M1890 815C1912 855 1955 886 2010 908" fill="none" stroke="#686866" strokeWidth="7" filter="url(#b2)" />
      <path d="M1876 946C1950 962 2010 942 2040 903C2055 890 2062 880 2065 860" fill="none" stroke="#a3a29b" strokeWidth="8" filter="url(#b5)" />
      <path d="M1895 955C1960 962 2012 940 2042 902C2054 890 2060 880 2063 868" fill="none" stroke="#a9a8a0" strokeWidth="3" filter="url(#b2)" />
      <path d="M1940 956C1990 948 2035 922 2057 886" fill="none" stroke="#b0afa6" strokeWidth="1" />
      <ellipse cx="1908" cy="855" rx="3" ry="9" fill="#fff" transform="rotate(-32 1908 855)" filter="url(#b2)" />
      <ellipse cx="1908" cy="855" rx="2" ry="6" fill="#fff" transform="rotate(-32 1908 855)" />
      <ellipse cx="2031" cy="924" rx="1" ry="4" fill="#fff" transform="rotate(35 2031 924)" />
    </g>
    <g transform="rotate(37 1771 1149)">
      <ellipse cx="1771" cy="1149" rx="5" ry="36" fill="#b5b5b0" filter="url(#b5)" />
      <ellipse cx="1771" cy="1149" rx="4" ry="24" fill="#fff" filter="url(#b2)" />
    </g>

    {/* rear loop */}
    <path d={LOOP} fill="url(#loopFill)" />
    <g clipPath="url(#loopClip)">
      <ellipse cx="1885" cy="708" rx="52" ry="30" fill="#9b9d9c" filter="url(#b14)" />
      <ellipse cx="2008" cy="712" rx="48" ry="18" fill="#757573" transform="rotate(42 2008 712)" filter="url(#b14)" />
      <path d="M1890 672C1960 645 2030 680 2064 755" fill="none" stroke="#8d8f8d" strokeWidth="8" filter="url(#b5)" />
      <path d="M1825 645L1936 645C2015 646 2088 700 2094 800" fill="none" stroke="#93938a" strokeWidth="8" filter="url(#b5)" />
      <path d="M1900 768Q1980 794 2095 800" fill="none" stroke="#6c6c6a" strokeWidth="22" filter="url(#b5)" />
      <path d="M2084 745C2092 800 2084 850 2064 895" fill="none" stroke="#686866" strokeWidth="20" filter="url(#b5)" />
    </g>

    {/* front run of the tube */}
    <path d={FRONT} fill="#6f6f6d" />
    <g clipPath="url(#frontClip)">
      <path d="M1601 600C1598 700 1655 768 1715 783L1760 795L1900 810C1950 812 1975 825 2000 836" fill="none" stroke="#9f9e95" strokeWidth="12" filter="url(#b5)" />
      <path d="M1985 825Q2030 845 2050 868" fill="none" stroke="#8e8c84" strokeWidth="16" filter="url(#b5)" />
      <path d="M1830 700C1850 760 1900 765 1950 782L2090 802" fill="none" stroke="#696967" strokeWidth="22" filter="url(#b5)" />
      <ellipse cx="2078" cy="830" rx="18" ry="52" fill="#686866" filter="url(#b5)" />
      <ellipse cx="1715" cy="640" rx="72" ry="24" fill="#838481" filter="url(#b14)" />
      <path d="M1622 615C1638 665 1680 686 1720 685C1765 682 1800 662 1815 630" fill="none" stroke="#7c7c79" strokeWidth="9" filter="url(#b5)" />
      <g clipPath="url(#diskClip)">
        <rect x="1590" y="370" width="420" height="280" fill="url(#darkFill)" />
        <path d="M1717 383C1660 440 1602 530 1601 640" fill="none" stroke="#6a6a61" strokeWidth="10" filter="url(#b5)" />
        <path d="M1714 412C1656 480 1626 550 1624 630" fill="none" stroke="#45443f" strokeWidth="6" filter="url(#b5)" />
        <path d="M1930 470C1880 540 1845 590 1822 640" fill="none" stroke="#45443f" strokeWidth="8" filter="url(#b5)" />
        <path d="M1990 428C1920 502 1864 570 1837 640" fill="none" stroke="#252421" strokeWidth="14" filter="url(#b2)" />
        <path d="M1925 478C1890 520 1866 560 1850 590" fill="none" stroke="#403f3a" strokeWidth="3" filter="url(#b2)" />
        <g transform="rotate(36 1818 526)">
          <ellipse cx="1818" cy="526" rx="6" ry="34" fill="#77756f" filter="url(#b5)" />
          <ellipse cx="1818" cy="526" rx="4" ry="22" fill="#f2f2f0" filter="url(#b2)" />
        </g>
      </g>
    </g>

    {/* cut face */}
    <ellipse cx="1855" cy="404" rx="141" ry="82" fill="#34312d" />
    <g clipPath="url(#capClip)" fill="#24231f">
      <path d="M1714 422Q1770 462 1815 484L1780 490L1710 440Z" />
      <path d="M1888 324Q1930 352 1968 362L1955 338Z" filter="url(#b2)" />
      <path d="M1930 372Q1965 392 1998 412V398Q1965 390 1930 372Z" filter="url(#b2)" />
      <path d="M1745 350Q1780 364 1800 382Q1765 376 1740 358Z" opacity="0.600" filter="url(#b2)" />
    </g>
  </svg>
);

/* ---------- data ---------- */

interface Tool {
  name: string;
  icon: React.ReactNode;
  active?: boolean;
}

const groups: { label: string; width: number; tools: Tool[] }[] = [
  {
    label: "SKETCH",
    width: 257,
    tools: [
      { name: "Create sketch", icon: <SketchIcon /> },
      { name: "Rectangle", icon: <RectangleIcon /> },
      { name: "Line", icon: <LineIcon /> },
    ],
  },
  {
    label: "CREATE",
    width: 174,
    tools: [
      { name: "Extrude", icon: <ExtrudeIcon /> },
      { name: "Create form", icon: <FormIcon /> },
    ],
  },
  { label: "MODIFY", width: 129, tools: [{ name: "Press pull", icon: <PressPullIcon /> }] },
  {
    label: "ASSEMBLE",
    width: 174,
    tools: [
      { name: "New component", icon: <ComponentIcon /> },
      { name: "Joint", icon: <JointIcon /> },
    ],
  },
  { label: "CONSTRUCT", width: 178, tools: [{ name: "Offset plane", icon: <PlaneIcon /> }] },
  { label: "INSPECT", width: 139, tools: [{ name: "Measure", icon: <MeasureIcon /> }] },
  { label: "INSERT", width: 120, tools: [{ name: "Insert image", icon: <ImageIcon /> }] },
  { label: "MAKE", width: 110, tools: [{ name: "3D print", icon: <PrinterIcon /> }] },
  { label: "ADD-INS", width: 139, tools: [{ name: "Scripts and add-ins", icon: <ScriptIcon /> }] },
  { label: "SELECT", width: 130, tools: [{ name: "Select", icon: <SelectIcon />, active: true }] },
  {
    label: "EXACTFLAT",
    width: 175,
    tools: [
      { name: "New flat pattern", icon: <FlatNewIcon /> },
      { name: "Export flat pattern", icon: <FlatExportIcon /> },
    ],
  },
  { label: "SIMSCALE", width: 163, tools: [{ name: "SimScale", icon: <SimscaleIcon /> }] },
];

interface Node {
  name: string;
  level: number;
  kind: Kind;
  state?: "open" | "closed";
  bulb?: boolean;
  selected?: boolean;
}

const nodes: Node[] = [
  { name: "Example v1", level: 0, kind: "assembly", state: "open", bulb: true },
  { name: "Document Settings", level: 1, kind: "gear", state: "closed" },
  { name: "Named Views", level: 1, kind: "folder", state: "closed" },
  { name: "Origin", level: 1, kind: "folder", state: "closed", bulb: false },
  { name: "Material 1:1", level: 1, kind: "box", state: "closed", bulb: true },
  { name: "Material 2:1", level: 1, kind: "box", state: "open", bulb: true, selected: true },
  { name: "Origin", level: 2, kind: "folder", state: "closed", bulb: false },
  { name: "Bodies", level: 2, kind: "folder", state: "open", bulb: true },
  { name: "Body1", level: 3, kind: "cylinder", bulb: true },
  { name: "Body2", level: 3, kind: "cylinder", bulb: false },
  { name: "Sketches", level: 2, kind: "folder", state: "closed", bulb: true },
];

const TreeNode = ({ node }: { node: Node }) => {
  const [lit, setLit] = useState(node.bulb === true);
  return (
    <TreeRow $level={node.level}>
      {node.state ? (
        <Expander aria-label={`Toggle ${node.name}`} aria-expanded={node.state === "open"}>
          {node.state === "open" ? <Expanded /> : <Collapsed />}
        </Expander>
      ) : (
        <ExpanderSpace />
      )}
      <NodeBox $selected={node.selected}>
        <NodeInner $selected={node.selected}>
          {node.bulb !== undefined && (
            <BulbButton aria-label={`Visibility of ${node.name}`} aria-pressed={lit} onClick={() => setLit(!lit)}>
              <Bulb on={lit} />
            </BulbButton>
          )}
          <NodeName>
            <KindIcon kind={node.kind} />
            {node.name}
          </NodeName>
        </NodeInner>
        {node.selected && (
          <ActiveRadio type="radio" name="active-component" aria-label={`Activate ${node.name}`} defaultChecked />
        )}
      </NodeBox>
    </TreeRow>
  );
};

export default function App() {
  return (
    <Page>
      <GlobalStyle />
      <SharedDefs />
      <TabStrip>
        <ActiveTab />
        <OtherTabs />
      </TabStrip>
      <Toolbar>
        <ModelButton>
          <Grip $width={10} $height={44} />
          <ModelText>
            MODEL
            <Caret />
          </ModelText>
        </ModelButton>
        {groups.map((g, i) => (
          <React.Fragment key={g.label}>
            {i > 0 && <Divider />}
            <Group $width={g.width}>
              <IconRow>
                {g.tools.map((t) => (
                  <ToolButton key={t.name} aria-label={t.name} $active={t.active}>
                    {t.icon}
                  </ToolButton>
                ))}
              </IconRow>
              <MenuButton>
                {g.label}
                <Caret />
              </MenuButton>
            </Group>
          </React.Fragment>
        ))}
      </Toolbar>
      <Workspace>
        <Panel>
          <PanelHeader>
            <button aria-label="Collapse browser">
              <svg width="20" height="12" viewBox="0 0 20 12" aria-hidden="true">
                <path d="M0 6L10 0V12ZM9 6L19 0V12Z" fill="#333" />
              </svg>
            </button>
            <PanelTitle>BROWSER</PanelTitle>
            <PanelActions>
              <button aria-label="Minimize">
                <svg width="18" height="18" viewBox="0 0 18 18" aria-hidden="true">
                  <circle cx="9" cy="9" r="9" fill="#2b2b2b" />
                  <path d="M4 9H14" stroke="#fff" strokeWidth="2" />
                </svg>
              </button>
              <Grip $width={6} $height={20} />
            </PanelActions>
          </PanelHeader>
          <Tree>
            {nodes.map((n, i) => (
              <TreeNode key={i} node={n} />
            ))}
          </Tree>
        </Panel>
        <Viewport>
          <Model />
        </Viewport>
      </Workspace>
    </Page>
  );
}
